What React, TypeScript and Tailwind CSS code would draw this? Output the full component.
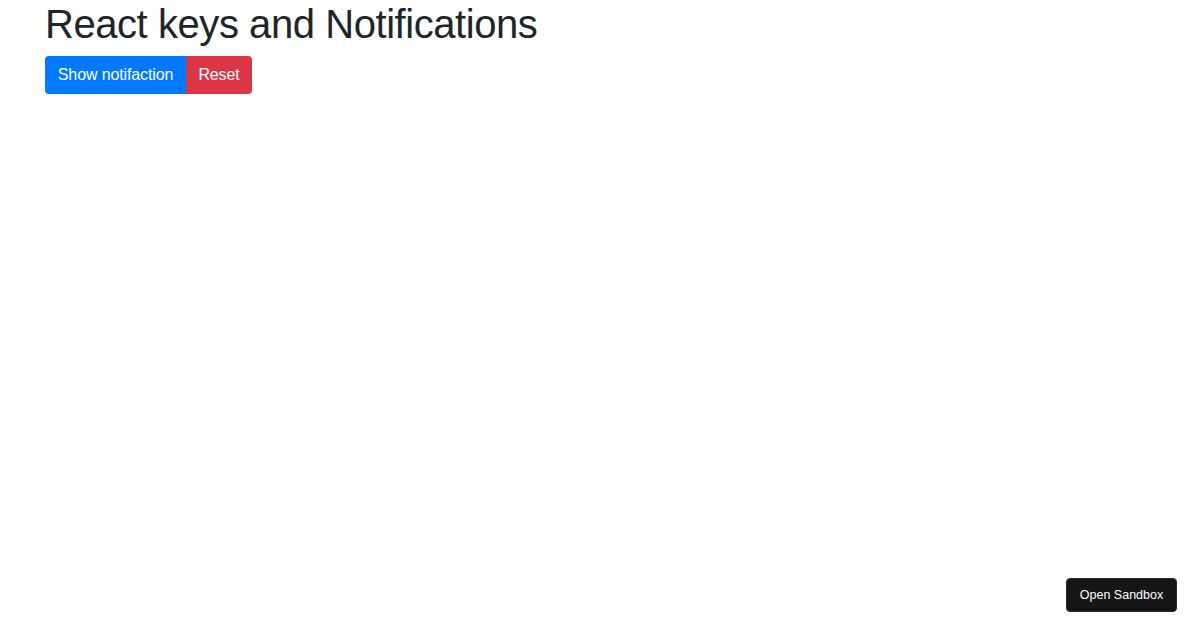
export default function App() {
  return (
    <div className="relative min-h-[630px] bg-white font-['Liberation_Sans',Arial,sans-serif] text-[#212529]">
      <div className="mx-auto max-w-[1140px] px-[15px]">
        <h1 className="mb-2 text-[40px] font-normal leading-[1.2] tracking-[-0.011em]">React keys and Notifications</h1>
        <div className="flex">
          <button className="h-[38px] w-[141px] rounded-l-[4px] bg-[#007bff] text-base leading-6 tracking-[-0.008em] text-white">
            Show notifaction
          </button>
          <button className="h-[38px] w-[66px] rounded-r-[4px] bg-[#dc3545] text-base leading-6 tracking-[-0.008em] text-white">
            Reset
          </button>
        </div>
      </div>
      <button className="absolute bottom-[18px] right-[23px] h-[34px] w-[111px] rounded-[4px] border border-[#2a2a2a] bg-[#151515] text-[12.5px] text-white">
        Open Sandbox
      </button>
    </div>
  );
}
